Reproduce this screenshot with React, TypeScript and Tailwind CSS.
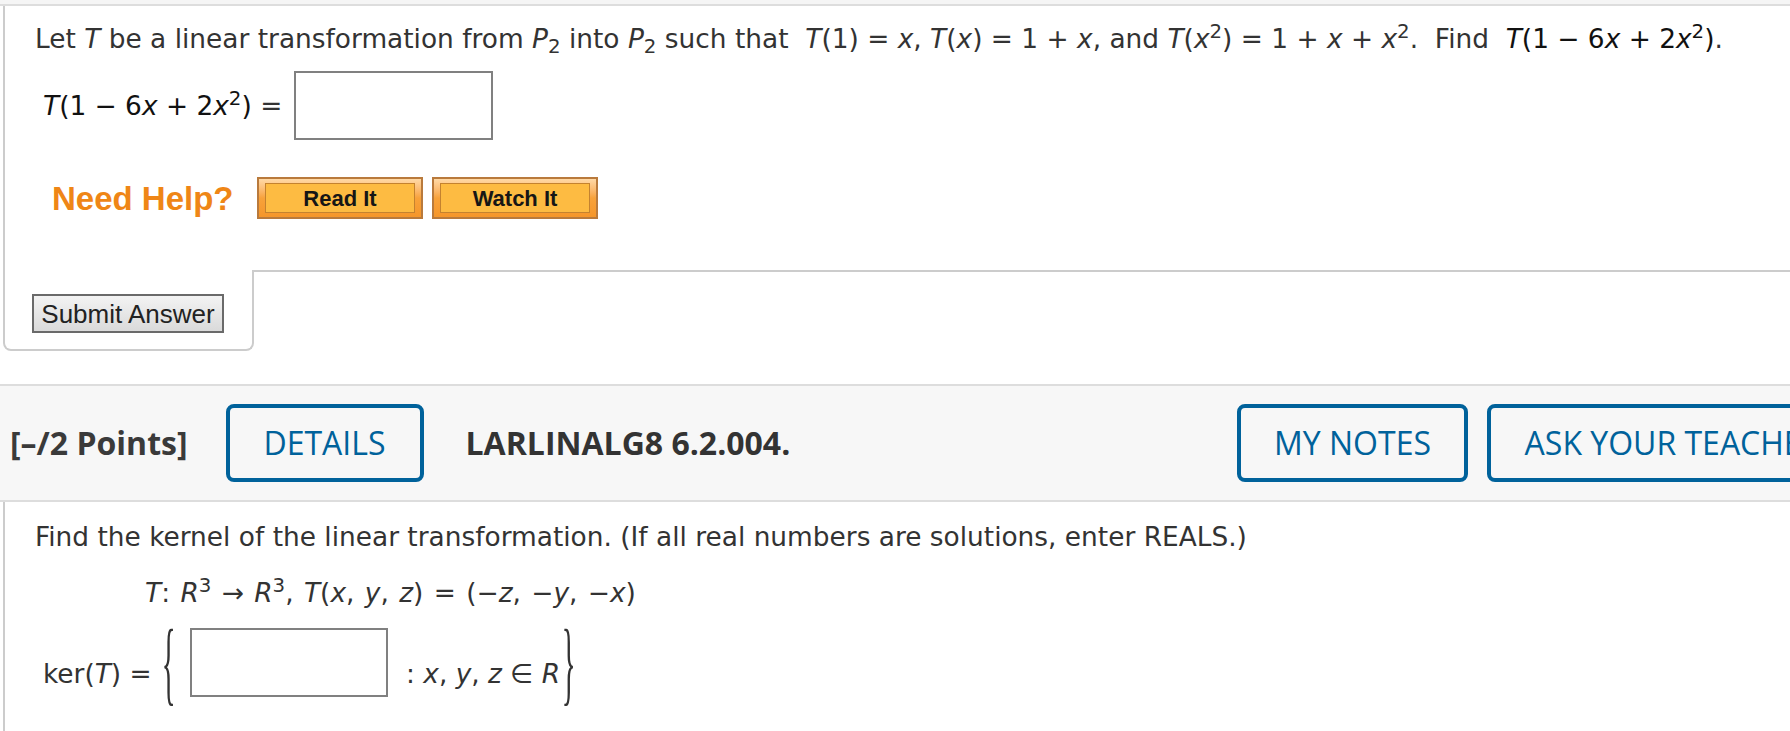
import React from 'react';

const mathFont = { fontFamily: '"DejaVu Sans", Verdana, sans-serif' };
const arial = { fontFamily: '"Liberation Sans", Arial, sans-serif' };
const openSans = { fontFamily: '"Open Sans", "Liberation Sans", sans-serif' };

const HelpButton: React.FC<{ label: string }> = ({ label }) => (
    <div className="w-[166px] h-[42px] border-2 border-[#b97a3c] bg-linear-to-b from-[#ffd9a6] via-[#f8a23a] to-[#f5962a] px-[6px] pt-[4px] pb-[4px]">
        <div
            className="h-full border border-[#c4822f] bg-[#fdbb42] flex items-center justify-center pt-[2px] font-bold text-[22px] text-[#161616] leading-none"
            style={arial}
        >
            {label}
        </div>
    </div>
);

const OutlineButton: React.FC<{ label: string; width: string }> = ({ label, width }) => (
    <div
        className={`${width} h-[78px] shrink-0 border-4 border-[#00629b] rounded-[8px] flex items-center justify-center text-[32px] font-medium text-[#00629b] leading-none whitespace-nowrap`}
        style={openSans}
    >
        {label}
    </div>
);

const Brace: React.FC<{ ch: string }> = ({ ch }) => (
    <span
        className="inline-block text-[36px] leading-none text-[#333] scale-x-[0.8] scale-y-[2.6]"
        style={{ fontFamily: '"Liberation Serif", serif' }}
    >
        {ch}
    </span>
);

export default function App() {
    return (
        <div className="w-[1790px] h-[731px] overflow-hidden bg-white text-[#333]" style={mathFont}>
            <div className="w-[1880px]">
                <div className="h-[6px] bg-[#f5f5f5] border-b-2 border-[#dddddd]" />

                {/* question 1 */}
                <div className="ml-[3px] border-l-2 border-[#cccccc] pl-[30px] pt-[13px] pb-[51px] text-[26.4px]">
                    <p className="leading-[40px] whitespace-nowrap">
                        Let <i>T</i> be a linear transformation from <i>P</i><sub>2</sub> into <i>P</i><sub>2</sub> such that&nbsp;{' '}
                        <i>T</i>(1) = <i>x</i>, <i>T</i>(<i>x</i>) = 1 + <i>x</i>, and <i>T</i>(<i>x</i><sup>2</sup>) = 1 + <i>x</i> + <i>x</i><sup>2</sup>.&nbsp; Find&nbsp;{' '}
                        <span className="text-[#111]"><i>T</i>(1 − 6<i>x</i> + 2<i>x</i><sup>2</sup>)</span>.
                    </p>
                    <div className="mt-[12px] h-[69px] flex items-center pl-[8px]">
                        <span className="w-[251px] leading-[40px] text-[#111] whitespace-nowrap">
                            <i>T</i>(1 − 6<i>x</i> + 2<i>x</i><sup>2</sup>) <span className="text-[#333]">=</span>
                        </span>
                        <div className="w-[199px] h-[69px] border-2 border-[#808080] bg-white" />
                    </div>
                    <div className="mt-[37px] h-[42px] flex items-center pl-[17px]">
                        <span className="w-[205px] text-[33px] font-bold text-[#ef8616] leading-none" style={arial}>
                            Need Help?
                        </span>
                        <HelpButton label="Read It" />
                        <div className="w-[9px]" />
                        <HelpButton label="Watch It" />
                    </div>
                </div>

                <div className="ml-[3px] flex">
                    <div className="w-[251px] border-l-2 border-r-2 border-b-2 border-[#cccccc] rounded-b-[8px] pl-[27px] pt-[24px] pb-[16px]">
                        <div
                            className="w-[192px] h-[39px] border-2 border-[#6a6a6a] bg-linear-to-b from-[#f3f3f3] to-[#dadada] flex items-center justify-center text-[26px] text-[#222] leading-none"
                            style={arial}
                        >
                            Submit Answer
                        </div>
                    </div>
                    <div className="flex-1 border-t-2 border-[#cccccc]" />
                </div>

                {/* question 2 header */}
                <div className="mt-[33px] h-[118px] border-y-2 border-[#dddddd] bg-[#f7f7f7] flex items-center pl-[10px] pr-[21px]" style={openSans}>
                    <span className="text-[32px] font-bold text-[#3a3a3a] leading-none whitespace-nowrap">[–/2 Points]</span>
                    <div className="w-[38px]" />
                    <OutlineButton label="DETAILS" width="w-[198px]" />
                    <div className="w-[42px]" />
                    <span className="text-[32px] font-bold text-[#333] leading-none whitespace-nowrap">LARLINALG8 6.2.004.</span>
                    <div className="flex-1" />
                    <OutlineButton label="MY NOTES" width="w-[231px]" />
                    <div className="w-[19px]" />
                    <OutlineButton label="ASK YOUR TEACHER" width="w-[372px]" />
                </div>

                {/* question 2 body */}
                <div className="ml-[3px] border-l-2 border-[#cccccc] pl-[30px] pt-[15px] pb-[40px] text-[26.4px]">
                    <p className="leading-[40px] whitespace-nowrap">
                        Find the kernel of the linear transformation. (If all real numbers are solutions, enter REALS.)
                    </p>
                    <p className="mt-[16px] pl-[110px] leading-[40px] whitespace-nowrap [word-spacing:2px]">
                        <i>T</i>: <i>R</i><sup>3</sup> → <i>R</i><sup>3</sup>, <i>T</i>(<i>x</i>, <i>y</i>, <i>z</i>) = (−<i>z</i>, −<i>y</i>, −<i>x</i>)
                    </p>
                    <div className="mt-[15px] h-[69px] flex items-center pl-[8px]">
                        <span className="w-[117px] pt-[22px] leading-[40px] whitespace-nowrap">
                            ker(<i>T</i>) =
                        </span>
                        <span className="w-[30px] flex justify-start">
                            <Brace ch="{" />
                        </span>
                        <div className="w-[198px] h-[69px] border-2 border-[#808080] bg-white" />
                        <span className="ml-[18px] w-[154px] pt-[22px] leading-[40px] whitespace-nowrap">
                            : <i>x</i>, <i>y</i>, <i>z</i> ∈ <i>R</i>
                        </span>
                        <Brace ch="}" />
                    </div>
                </div>
            </div>
        </div>
    );
}
